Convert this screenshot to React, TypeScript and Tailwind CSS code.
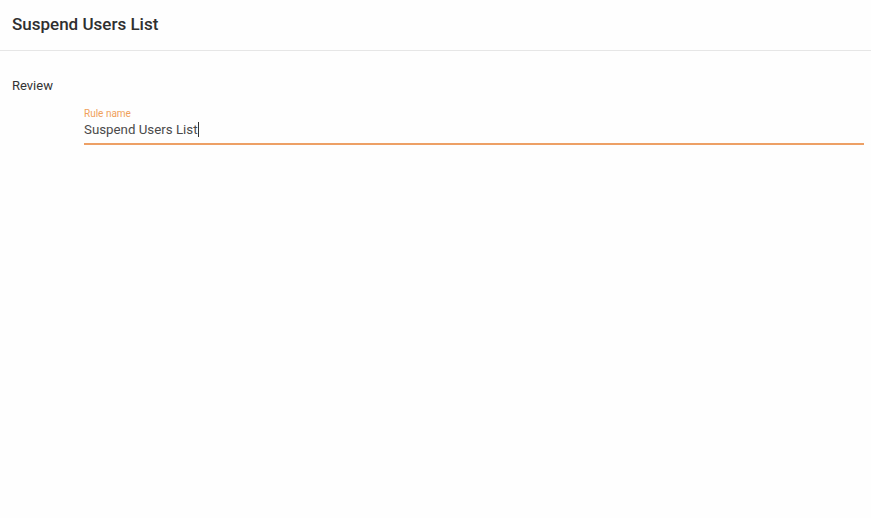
export default function App() {
  return (
    <div
      className="w-[871px] h-[518px] bg-[#fefefe] text-[#333]"
      style={{ fontFamily: 'Roboto, "Liberation Sans", Arial, sans-serif' }}
    >
      <div className="h-[51px] border-b border-[#e6e6e6] flex items-center px-3">
        <h1 className="text-[17px] font-medium text-[#2f2f2f] leading-none -mt-[1px]">Suspend Users List</h1>
      </div>
      <div className="pl-3 pt-[28px]">
        <div className="text-[13px] text-[#333] leading-none">Review</div>
      </div>
      <div className="ml-[84px] mr-[7px] mt-[17px]">
        <div className="text-[10px] text-[#f0a05a] leading-none">Rule name</div>
        <div className="flex items-start pt-[4px] h-[26px] border-b-2 border-[#eda065]">
          <span className="text-[13.3px] text-[#4a4a4a] leading-none">Suspend Users List</span>
          <span className="w-[1px] h-[15px] bg-[#333] -mt-[1px]" />
        </div>
      </div>
    </div>
  );
}
